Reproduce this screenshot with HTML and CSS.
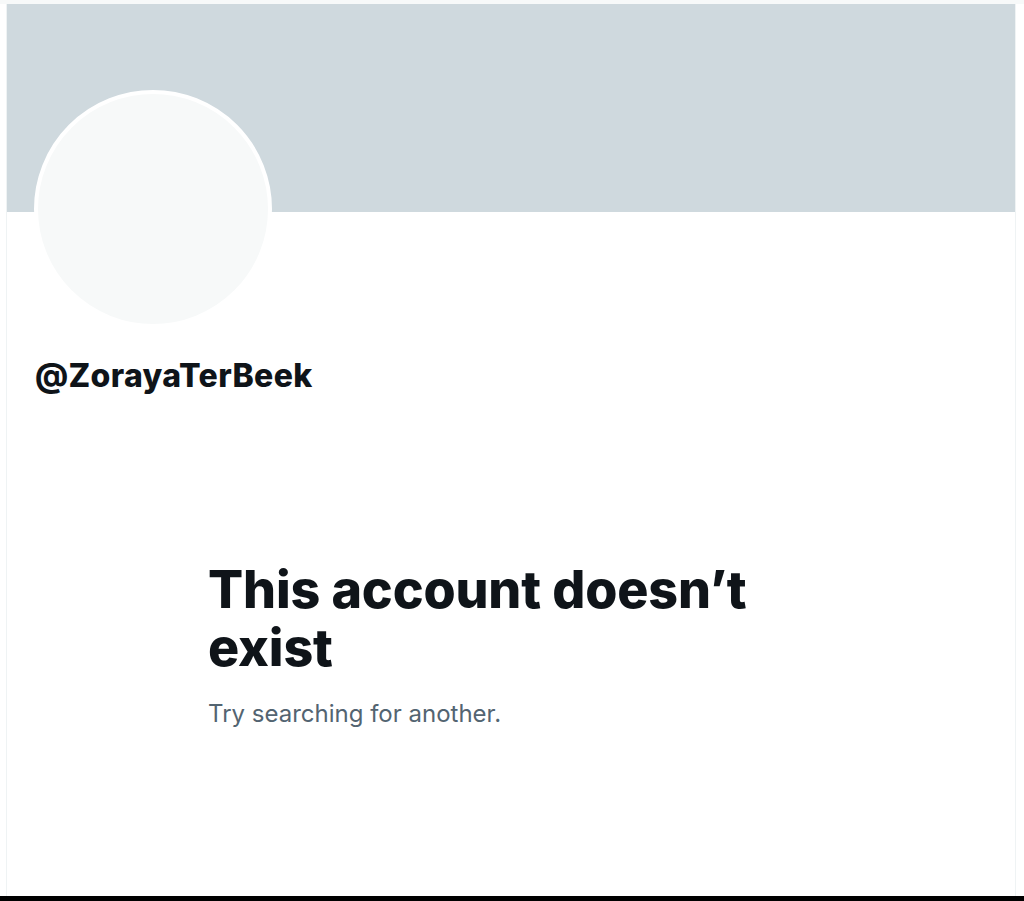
FILE: index.html
```html
<!DOCTYPE html>
<html lang="en">
<head>
<meta charset="utf-8">
<title>Profile</title>
<link rel="stylesheet" href="styles.css">
</head>
<body>
<div class="topstrip"></div>
<main class="column">
  <div class="banner"></div>
  <div class="profile-head">
    <div class="avatar"></div>
  </div>
  <div class="handle">@ZorayaTerBeek</div>
  <section class="empty">
    <h1 class="empty-title">This account doesn’t exist</h1>
    <p class="empty-sub">Try searching for another.</p>
  </section>
</main>
<div class="bottombar"></div>
</body>
</html>
```

FILE: styles.css
```css
html, body {
  margin: 0;
  padding: 0;
  background: #ffffff;
  height: 901px;
  overflow: hidden;
}
body {
  font-family: Inter, "Liberation Sans", sans-serif;
  color: #0f1419;
  display: flex;
  flex-direction: column;
}
.topstrip {
  height: 4px;
  background: #f7f9f9;
  flex: none;
}
.column {
  flex: 1;
  margin-left: 6px;
  width: 1008px;
  border-left: 1px solid #eff3f4;
  border-right: 1px solid #eff3f4;
  display: flex;
  flex-direction: column;
  position: relative;
}
.banner {
  height: 208px;
  background: #cfd9de;
  flex: none;
}
.profile-head {
  height: 115px;
  position: relative;
}
.avatar {
  position: absolute;
  left: 27px;
  top: -122px;
  width: 230px;
  height: 230px;
  border-radius: 50%;
  background: #f7f9f9;
  border: 4px solid #ffffff;
}
.handle {
  margin: 29px 0 0 28px;
  font-size: 32px;
  font-weight: 800;
  line-height: 40px;
  letter-spacing: 0.35px;
}
.empty {
  margin: 165px 0 0 201px;
  width: 580px;
}
.empty-title {
  margin: 0;
  font-size: 52px;
  font-weight: 800;
  line-height: 58px;
  letter-spacing: -0.15px;
}
.empty-sub {
  margin: 21px 0 0 0;
  font-size: 24px;
  line-height: 32px;
  color: #536471;
}
.bottombar {
  height: 5px;
  background: #000000;
  flex: none;
}
```
